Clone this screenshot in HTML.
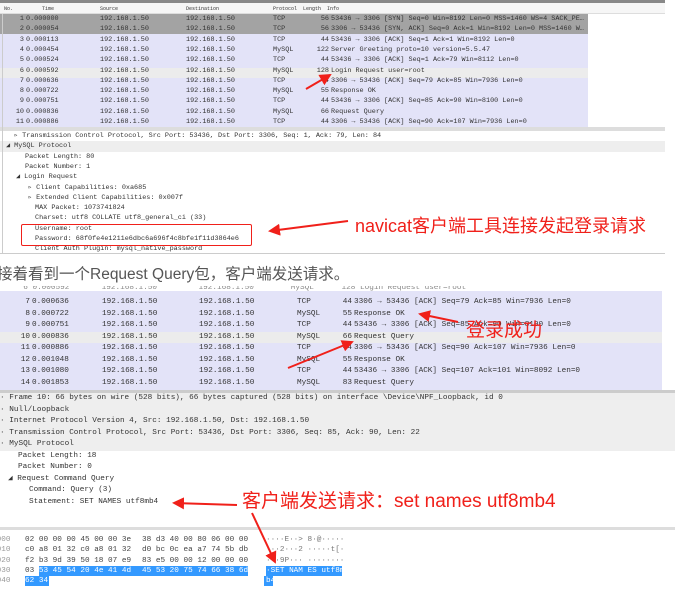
<!DOCTYPE html>
<html><head><meta charset="utf-8"><style>
*{margin:0;padding:0;box-sizing:border-box}
body{width:690px;height:600px;background:#fff;position:relative;overflow:hidden;font-family:"Liberation Mono",monospace;color:#333}
.a{position:absolute;white-space:pre}
.t{font-size:6.8px;line-height:10.3px;height:10.3px}
.b{font-size:7.7px;line-height:11.5px;height:11.5px}
.h{font-size:7.7px;line-height:10.3px;height:10.3px}
.r{text-align:right}
.red{color:#f0201a;font-family:"Liberation Sans","Noto Sans CJK SC",sans-serif;white-space:nowrap;position:absolute}
</style></head><body>
<div class="a" style="left:0;top:0;width:665px;height:3px;background:#888"></div>
<div class="a" style="left:0;top:3px;width:665px;height:11px;background:#f6f6f6;border-bottom:1px solid #ddd"></div>
<div class="a" style="left:0;top:14px;width:588px;height:20px;background:#a3a3a3"></div>
<div class="a" style="left:0;top:34px;width:588px;height:93px;background:#e3e3f8"></div>
<div class="a" style="left:0;top:68px;width:588px;height:10px;background:#ececec"></div>
<div class="a" style="left:0;top:127px;width:665px;height:4px;background:#ddd"></div>
<div class="a" style="left:0;top:141px;width:665px;height:11px;background:#eee"></div>
<div class="a" style="left:2px;top:14px;width:1px;height:240px;background:#ccc"></div>
<div class="a" style="left:0;top:253px;width:665px;height:1px;background:#ccc"></div>
<div class="a t" style="left:4px;top:4px;font-size:5px">No.</div>
<div class="a t" style="left:42px;top:4px;font-size:5px">Time</div>
<div class="a t" style="left:100px;top:4px;font-size:5px">Source</div>
<div class="a t" style="left:186px;top:4px;font-size:5px">Destination</div>
<div class="a t" style="left:273px;top:4px;font-size:5px">Protocol  Length  Info</div>
<div id="top"></div>
<script>
var rows=[["1","0.000000","TCP","56","53436 → 3306 [SYN] Seq=0 Win=8192 Len=0 MSS=1460 WS=4 SACK_PE…"],
["2","0.000054","TCP","56","3306 → 53436 [SYN, ACK] Seq=0 Ack=1 Win=8192 Len=0 MSS=1460 W…"],
["3","0.000113","TCP","44","53436 → 3306 [ACK] Seq=1 Ack=1 Win=8192 Len=0"],
["4","0.000454","MySQL","122","Server Greeting proto=10 version=5.5.47"],
["5","0.000524","TCP","44","53436 → 3306 [ACK] Seq=1 Ack=79 Win=8112 Len=0"],
["6","0.000592","MySQL","128","Login Request user=root"],
["7","0.000636","TCP","44","3306 → 53436 [ACK] Seq=79 Ack=85 Win=7936 Len=0"],
["8","0.000722","MySQL","55","Response OK"],
["9","0.000751","TCP","44","53436 → 3306 [ACK] Seq=85 Ack=90 Win=8100 Len=0"],
["10","0.000836","MySQL","66","Request Query"],
["11","0.000886","TCP","44","3306 → 53436 [ACK] Seq=90 Ack=107 Win=7936 Len=0"]];
var h="";
rows.forEach(function(r,i){var y=14+i*10.3;
h+='<div class="a t r" style="left:0;width:24px;top:'+y+'px">'+r[0]+'</div>';
h+='<div class="a t" style="left:26px;top:'+y+'px">'+r[1]+'</div>';
h+='<div class="a t" style="left:100px;top:'+y+'px">192.168.1.50</div>';
h+='<div class="a t" style="left:186px;top:'+y+'px">192.168.1.50</div>';
h+='<div class="a t" style="left:273px;top:'+y+'px">'+r[2]+'</div>';
h+='<div class="a t r" style="left:300px;width:29px;top:'+y+'px">'+r[3]+'</div>';
h+='<div class="a t" style="left:331px;top:'+y+'px">'+r[4]+'</div>';});
var d=[[14,"▹ Transmission Control Protocol, Src Port: 53436, Dst Port: 3306, Seq: 1, Ack: 79, Len: 84"],[6,"◢ MySQL Protocol"],[25,"Packet Length: 80"],[25,"Packet Number: 1"],[16,"◢ Login Request"],[28,"▹ Client Capabilities: 0xa685"],[28,"▹ Extended Client Capabilities: 0x007f"],[35,"MAX Packet: 1073741824"],[35,"Charset: utf8 COLLATE utf8_general_ci (33)"],[35,"Username: root"],[35,"Password: 68f0fe4e1211e6dbc6a696f4c8bfe1f11d3864e6"],[35,"Client Auth Plugin: mysql_native_password"]];
d.forEach(function(r,i){h+='<div class="a t" style="left:'+r[0]+'px;top:'+(131+i*10.3)+'px">'+r[1]+'</div>';});
var rows2=[["7","0.000636","TCP","44","3306 → 53436 [ACK] Seq=79 Ack=85 Win=7936 Len=0"],
["8","0.000722","MySQL","55","Response OK"],
["9","0.000751","TCP","44","53436 → 3306 [ACK] Seq=85 Ack=90 Win=8100 Len=0"],
["10","0.000836","MySQL","66","Request Query"],
["11","0.000886","TCP","44","3306 → 53436 [ACK] Seq=90 Ack=107 Win=7936 Len=0"],
["12","0.001048","MySQL","55","Response OK"],
["13","0.001080","TCP","44","53436 → 3306 [ACK] Seq=107 Ack=101 Win=8092 Len=0"],
["14","0.001853","MySQL","83","Request Query"]];
h+='<div class="a" style="left:0;top:291px;width:662px;height:99px;background:#e3e3f8"></div>';
h+='<div class="a" style="left:0;top:332px;width:662px;height:11px;background:#ececec"></div>';
h+='<div class="a b" style="left:14px;top:286px;color:#888;height:6px;overflow:hidden;line-height:4px">  6 0.000592       192.168.1.50         192.168.1.50        MySQL      128 Login Request user=root</div>';
rows2.forEach(function(r,i){var y=297+i*11.5;
h+='<div class="a b r" style="left:0;width:30px;top:'+y+'px">'+r[0]+'</div>';
h+='<div class="a b" style="left:32px;top:'+y+'px">'+r[1]+'</div>';
h+='<div class="a b" style="left:102px;top:'+y+'px">192.168.1.50</div>';
h+='<div class="a b" style="left:199px;top:'+y+'px">192.168.1.50</div>';
h+='<div class="a b" style="left:297px;top:'+y+'px">'+r[2]+'</div>';
h+='<div class="a b r" style="left:330px;width:22px;top:'+y+'px">'+r[3]+'</div>';
h+='<div class="a b" style="left:354px;top:'+y+'px">'+r[4]+'</div>';});
h+='<div class="a" style="left:0;top:390px;width:675px;height:3px;background:#ccc"></div>';
h+='<div class="a" style="left:0;top:393px;width:675px;height:58px;background:#eee"></div>';
var d2=[[0,"· Frame 10: 66 bytes on wire (528 bits), 66 bytes captured (528 bits) on interface \\Device\\NPF_Loopback, id 0"],[0,"· Null/Loopback"],[0,"· Internet Protocol Version 4, Src: 192.168.1.50, Dst: 192.168.1.50"],[0,"· Transmission Control Protocol, Src Port: 53436, Dst Port: 3306, Seq: 85, Ack: 90, Len: 22"],[0,"· MySQL Protocol"],[18,"Packet Length: 18"],[18,"Packet Number: 0"],[8,"◢ Request Command Query"],[29,"Command: Query (3)"],[29,"Statement: SET NAMES utf8mb4"]];
d2.forEach(function(r,i){h+='<div class="a b" style="left:'+r[0]+'px;top:'+(393+i*11.5)+'px">'+r[1]+'</div>';});
h+='<div class="a" style="left:0;top:527px;width:675px;height:3px;background:#ddd"></div>';
h+='<div class="a" style="left:39px;top:566px;width:209px;height:10.3px;background:#3399ff"></div>';
h+='<div class="a" style="left:25px;top:576px;width:24px;height:10.3px;background:#3399ff"></div>';
h+='<div class="a" style="left:266px;top:566px;width:76px;height:10.3px;background:#3399ff"></div>';
h+='<div class="a" style="left:264px;top:576px;width:9px;height:10.3px;background:#3399ff"></div>';
var hx=[["0000","02 00 00 00 45 00 00 3e","38 d3 40 00 80 06 00 00","····E··> 8·@·····"],["0010","c0 a8 01 32 c0 a8 01 32","d0 bc 0c ea a7 74 5b db","···2···2 ·····t[·"],["0020","f2 b3 9d 39 50 18 07 e9","83 e5 00 00 12 00 00 00","···9P··· ········"],["0030","03 53 45 54 20 4e 41 4d","45 53 20 75 74 66 38 6d","·SET NAM ES utf8m"],["0040","62 34","","b4"]];
hx.forEach(function(r,i){var y=535+i*10.3;var c=i>=3?'color:#fff;':'color:#444;';
h+='<div class="a h" style="left:-8px;top:'+y+'px;color:#999">'+r[0]+'</div>';
h+='<div class="a h" style="left:25px;top:'+y+'px;'+c+'">'+(i==3?'<span style="color:#444">03</span>'+r[1].slice(2):r[1])+'</div>';
h+='<div class="a h" style="left:142px;top:'+y+'px;'+c+'">'+r[2]+'</div>';
h+='<div class="a h" style="left:266px;top:'+y+'px;'+(i<3?'color:#777':'color:#fff')+'">'+r[3]+'</div>';});
document.getElementById("top").outerHTML=h;
</script>
<div class="a" style="left:21px;top:224px;width:231px;height:22px;border:1.5px solid #f0201a;border-radius:2px"></div>
<div class="a" style="left:-3px;top:262px;font-family:'Liberation Sans','Noto Sans CJK SC',sans-serif;font-size:15.5px;color:#555">接着看到一个Request Query包，客户端发送请求。</div>
<div class="red" style="left:355px;top:212px;font-size:18px">navicat客户端工具连接发起登录请求</div>
<div class="red" style="left:466px;top:315px;font-size:19px">登录成功</div>
<div class="red" style="left:242px;top:486px;font-size:19px">客户端发送请求：set names utf8mb4</div>
<svg class="a" style="left:0;top:0" width="690" height="600">
<defs><marker id="m" markerWidth="6" markerHeight="6" refX="5" refY="3" orient="auto"><path d="M0,0L6,3L0,6z" fill="#f0201a"/></marker></defs>
<g stroke="#f0201a" stroke-width="2" fill="none" marker-end="url(#m)">
<line x1="306" y1="89" x2="330" y2="75"/>
<line x1="348" y1="221" x2="270" y2="231"/>
<line x1="458" y1="322" x2="420" y2="314"/>
<line x1="288" y1="368" x2="352" y2="342"/>
<line x1="237" y1="505" x2="174" y2="503"/>
<line x1="252" y1="513" x2="275" y2="562"/>
</g></svg>
</body></html>
